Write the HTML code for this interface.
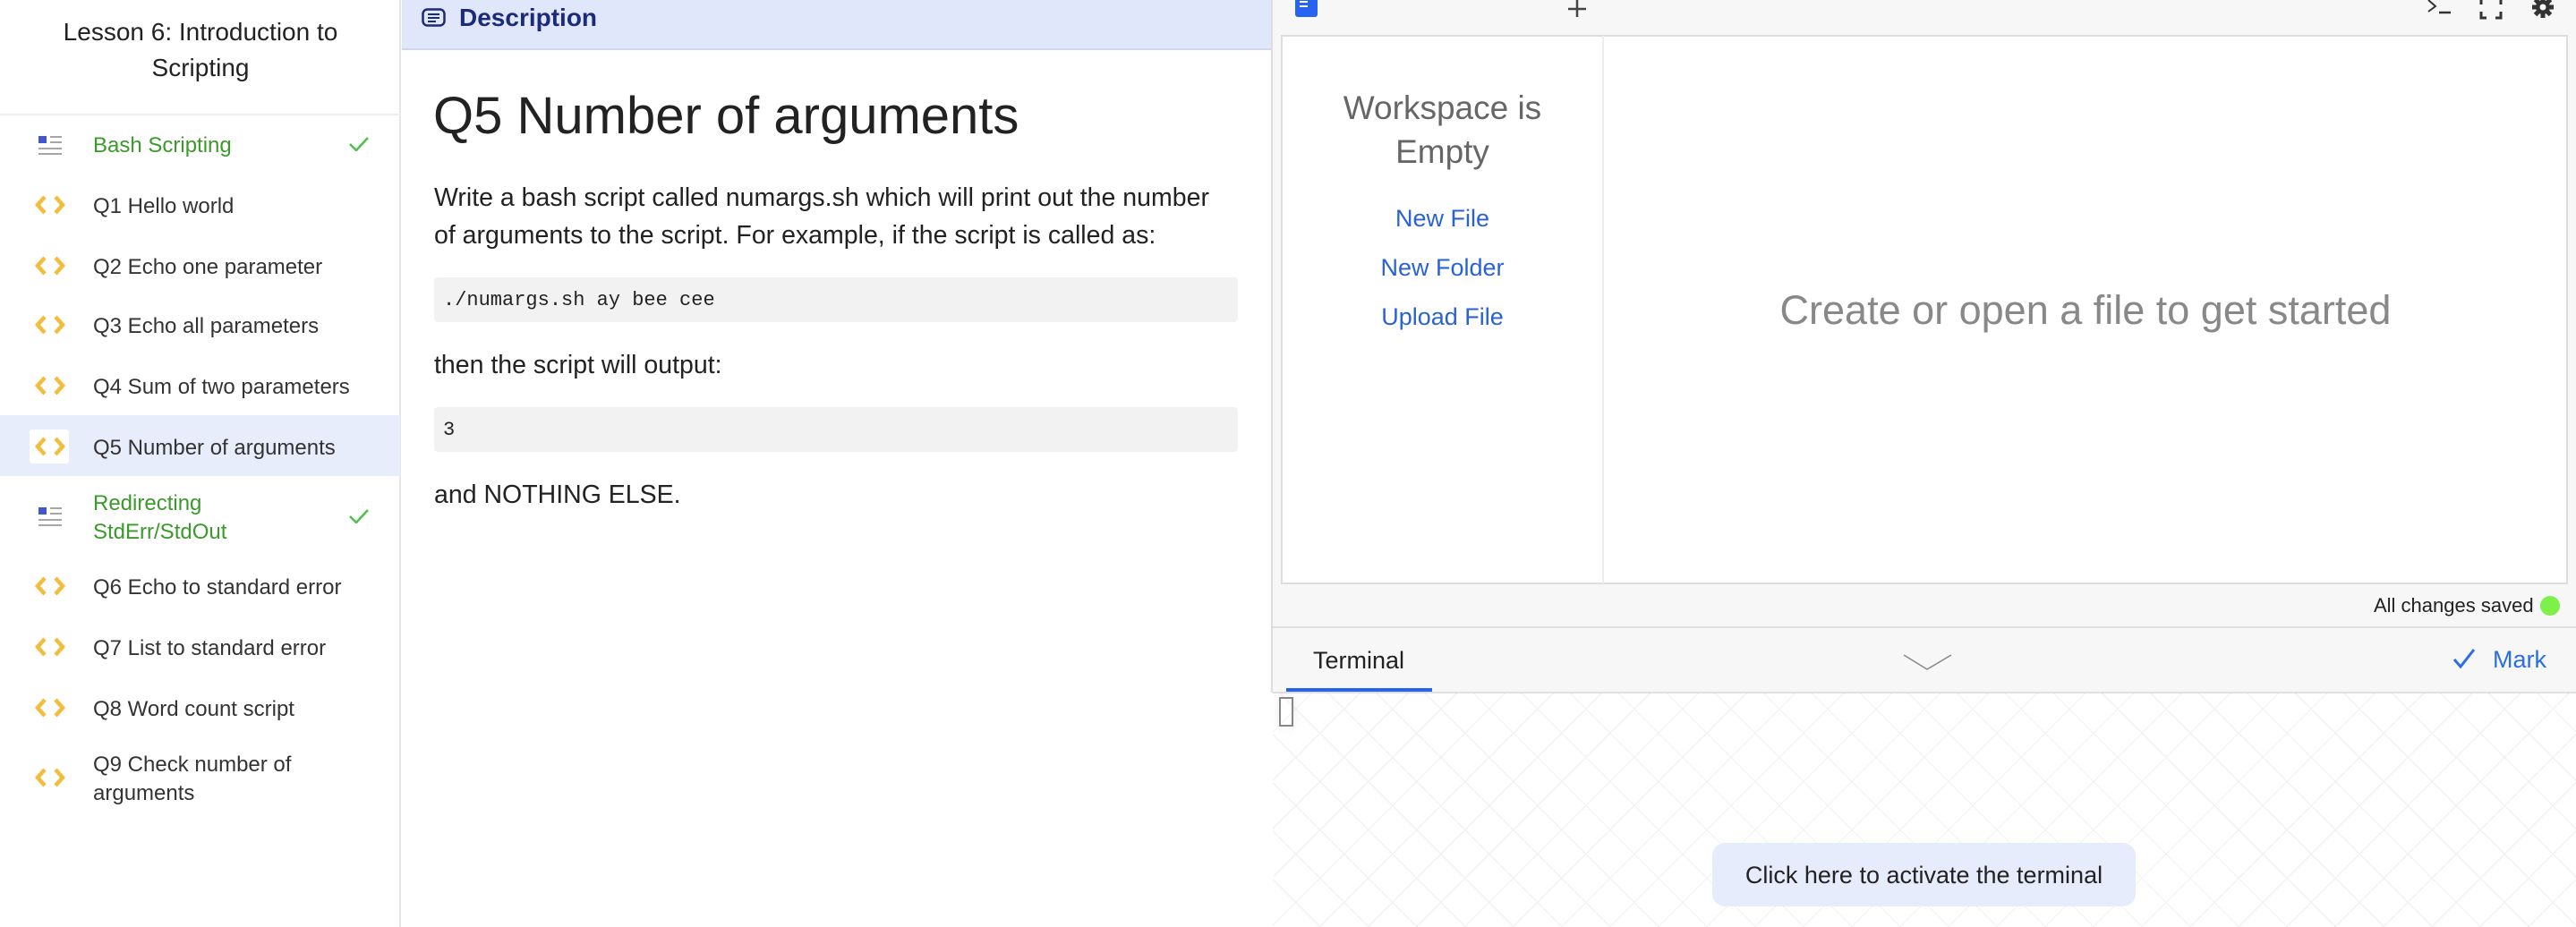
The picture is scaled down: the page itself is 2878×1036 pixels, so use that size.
<!DOCTYPE html>
<html><head><meta charset="utf-8"><style>
*{margin:0;padding:0;box-sizing:border-box}
body{width:2878px;height:1036px;overflow:hidden;background:#fff;font-family:"Liberation Sans",sans-serif;position:relative}
.a{position:absolute;white-space:nowrap}
.side{left:0;top:0;width:448px;height:1036px;border-right:2px solid #e6e6e6}
.item{position:absolute;left:104px;font-size:24px;color:#333;line-height:32px}
.g{color:#3a9a2a}
.ci{position:absolute;left:39px;width:34px;height:22px}
.di{position:absolute;left:43px;width:26px;height:24px}
.ck{position:absolute;left:390px;width:22px;height:16px}
.code{position:absolute;left:485px;width:898px;height:50px;background:#f2f2f2;border-radius:4px;font-family:"Liberation Mono",monospace;font-size:22px;color:#222;padding-left:10px;line-height:52px}
.p{position:absolute;left:485px;font-size:28.5px;color:#222;line-height:42px}
.lnk{position:absolute;width:359px;left:1432px;text-align:center;font-size:27px;color:#2a62d6}
</style></head><body>
<div class="a side"></div>
<div class="a" style="left:0;width:448px;top:16px;text-align:center;font-size:28px;line-height:40px;color:#222;white-space:normal;padding:0 50px">Lesson 6: Introduction to Scripting</div>
<div class="a" style="left:0;top:127px;width:448px;height:2px;background:#eee"></div>
<div class="a" style="left:0;top:464px;width:447px;height:68px;background:#e8edfb"></div>
<div class="a" style="left:33px;top:480px;width:44px;height:38px;background:#fff;border-radius:3px"></div>

<svg width="0" height="0" style="position:absolute"><defs>
<g id="code"><path d="M11 2 L3 11 L11 20" fill="none" stroke="#f2bd3d" stroke-width="4.5"/><path d="M23 2 L31 11 L23 20" fill="none" stroke="#f2bd3d" stroke-width="4.5"/></g>
<g id="doc"><rect x="0" y="2" width="9" height="8" fill="#4156d0"/><path d="M13 3H26M13 9H26M0 16H26M0 22H26" stroke="#888" stroke-width="1.5"/></g>
<g id="ck"><path d="M1 8 L8 15 L21 1" fill="none" stroke="#4cc14c" stroke-width="2.5"/></g>
</defs></svg>

<svg class="di" style="top:150px"><use href="#doc"/></svg>
<div class="item g" style="top:147px">Bash Scripting</div>
<svg class="ck" style="top:153px"><use href="#ck"/></svg>

<svg class="ci" style="top:218px"><use href="#code"/></svg><div class="item" style="top:215px">Q1 Hello world</div>
<svg class="ci" style="top:286px"><use href="#code"/></svg><div class="item" style="top:283px">Q2 Echo one parameter</div>
<svg class="ci" style="top:352px"><use href="#code"/></svg><div class="item" style="top:349px">Q3 Echo all parameters</div>
<svg class="ci" style="top:420px"><use href="#code"/></svg><div class="item" style="top:417px">Q4 Sum of two parameters</div>
<svg class="ci" style="top:488px"><use href="#code"/></svg><div class="item" style="top:485px">Q5 Number of arguments</div>

<svg class="di" style="top:565px"><use href="#doc"/></svg>
<div class="item g" style="top:547px;line-height:32px">Redirecting<br>StdErr/StdOut</div>
<svg class="ck" style="top:569px"><use href="#ck"/></svg>

<svg class="ci" style="top:644px"><use href="#code"/></svg><div class="item" style="top:641px">Q6 Echo to standard error</div>
<svg class="ci" style="top:712px"><use href="#code"/></svg><div class="item" style="top:709px">Q7 List to standard error</div>
<svg class="ci" style="top:780px"><use href="#code"/></svg><div class="item" style="top:777px">Q8 Word count script</div>
<svg class="ci" style="top:858px"><use href="#code"/></svg><div class="item" style="top:839px;line-height:32px">Q9 Check number of<br>arguments</div>

<!-- middle -->
<div class="a" style="left:449px;top:0;width:971px;height:56px;background:#e1e7fa;border-bottom:2px solid #cdd6f0"></div>
<svg class="a" style="left:471px;top:9px" width="28" height="22"><rect x="1.5" y="1.5" width="24" height="18" rx="5" fill="none" stroke="#1b2b7a" stroke-width="2.5"/><path d="M7 7H20M7 11H20M7 15H16" stroke="#1b2b7a" stroke-width="2"/></svg>
<div class="a" style="left:513px;top:2px;font-size:28px;line-height:36px;color:#1b2b7a;font-weight:bold">Description</div>
<div class="a" style="left:484px;top:95px;font-size:58px;line-height:70px;color:#222">Q5 Number of arguments</div>
<div class="p" style="top:200px">Write a bash script called numargs.sh which will print out the number<br>of arguments to the script. For example, if the script is called as:</div>
<div class="code" style="top:310px">./numargs.sh ay bee cee</div>
<div class="p" style="top:387px">then the script will output:</div>
<div class="code" style="top:455px">3</div>
<div class="p" style="top:532px">and NOTHING ELSE.</div>

<!-- right -->
<div class="a" style="left:1420px;top:0;width:1458px;height:774px;background:#f7f7f7;border-left:2px solid #ddd"></div>
<div class="a" style="left:1447px;top:-6px;width:25px;height:25px;background:#2563f0;border-radius:3px"></div>
<div class="a" style="left:1452px;top:1px;width:9px;height:2px;background:#fff"></div>
<div class="a" style="left:1452px;top:6px;width:9px;height:2px;background:#fff"></div>
<svg class="a" style="left:1751px;top:0" width="22" height="20"><path d="M11 0V19M1 10H21" stroke="#444" stroke-width="2.5"/></svg>
<svg class="a" style="left:2712px;top:0" width="26" height="20"><path d="M1 0L9 7L1 13" fill="none" stroke="#333" stroke-width="2"/><path d="M13 14H26" stroke="#333" stroke-width="2.5"/></svg>
<svg class="a" style="left:2770px;top:0" width="26" height="22"><path d="M2 0V5M24 0V5M2 13V20H8M24 13V20H18" fill="none" stroke="#333" stroke-width="3"/></svg>
<svg class="a" style="left:2828px;top:0" width="26" height="22"><circle cx="13" cy="8" r="8" fill="#333"/><g stroke="#333" stroke-width="5"><path d="M13 -4V20M1 8H25M4.5 -0.5L21.5 16.5M21.5 -0.5L4.5 16.5"/></g><circle cx="13" cy="8" r="3.5" fill="#f7f7f7"/></svg>

<div class="a" style="left:1431px;top:39px;width:1438px;height:614px;background:#fff;border:2px solid #ddd"></div>
<div class="a" style="left:1790px;top:40px;width:2px;height:612px;background:#eee"></div>
<div class="a" style="left:1432px;width:359px;top:96px;text-align:center;font-size:37px;line-height:49px;color:#666">Workspace is<br>Empty</div>
<div class="lnk" style="top:229px">New File</div>
<div class="lnk" style="top:284px">New Folder</div>
<div class="lnk" style="top:339px">Upload File</div>
<div class="a" style="left:1792px;width:1076px;top:321px;text-align:center;font-size:45px;color:#888">Create or open a file to get started</div>

<div class="a" style="left:2652px;top:664px;font-size:22px;color:#222">All changes saved</div>
<div class="a" style="left:2838px;top:666px;width:22px;height:22px;border-radius:50%;background:#7df04a"></div>
<div class="a" style="left:1422px;top:700px;width:1456px;height:2px;background:#e0e0e0"></div>
<div class="a" style="left:1467px;top:723px;font-size:27px;color:#222">Terminal</div>
<div class="a" style="left:1437px;top:769px;width:163px;height:4px;background:#2563f0"></div>
<svg class="a" style="left:2126px;top:730px" width="56" height="20"><path d="M1 2L27 18L54 2" fill="none" stroke="#888" stroke-width="1.5"/></svg>
<svg class="a" style="left:2740px;top:724px" width="26" height="24"><path d="M2 13L9 21L24 2" fill="none" stroke="#2a6ee6" stroke-width="3"/></svg>
<div class="a" style="left:2785px;top:722px;font-size:27px;color:#2a6ee6">Mark</div>
<div class="a" style="left:1422px;top:773px;width:1456px;height:2px;background:#e0e0e0"></div>

<div class="a" style="left:1422px;top:775px;width:1456px;height:261px;background:
repeating-linear-gradient(45deg,transparent 0,transparent 37px,#f2f2f2 37px,#f2f2f2 38.2px),
repeating-linear-gradient(-45deg,transparent 0,transparent 37px,#f2f2f2 37px,#f2f2f2 38.2px),#fff"></div>
<div class="a" style="left:1429px;top:779px;width:16px;height:33px;border:2px solid #888;box-shadow:0 0 12px rgba(0,0,0,.08)"></div>
<div class="a" style="left:1913px;top:942px;width:473px;height:71px;background:#e6ecfc;border-radius:14px;font-size:27px;color:#222;text-align:center;line-height:73px">Click here to activate the terminal</div>
</body></html>
